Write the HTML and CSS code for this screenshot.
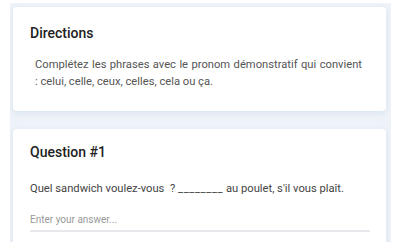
FILE: index.html
```html
<!DOCTYPE html>
<html>
<head>
<meta charset="utf-8">
<link rel="stylesheet" href="styles.css">
</head>
<body>
<div class="panel">
  <section class="card card-directions">
    <h2 class="card-title">Directions</h2>
    <p class="directions-text">Complétez les phrases avec le pronom démonstratif qui convient : celui, celle, ceux, celles, cela ou ça.</p>
  </section>
  <section class="card card-question">
    <h2 class="card-title">Question #1</h2>
    <p class="question-text">Quel sandwich voulez-vous&nbsp; ? <span class="blank">________</span> au poulet, s'il vous plaît.</p>
    <input class="answer" type="text" placeholder="Enter your answer...">
  </section>
</div>
</body>
</html>
```
FILE: styles.css
```css
html, body {
  margin: 0;
  padding: 0;
  background: #ffffff;
  font-family: "Roboto", "Noto Sans", sans-serif;
}
body {
  width: 400px;
  height: 250px;
  overflow: hidden;
}
.panel {
  margin: 3px 9px 0 10px;
  height: 239px;
  overflow: hidden;
  background: #eef3f9;
  padding: 4px 5px 0 3px;
  box-sizing: border-box;
  display: flex;
  flex-direction: column;
  gap: 18px;
}
.card {
  background: #ffffff;
  border-radius: 4px;
  box-shadow: 0 2px 6px rgba(120, 150, 190, 0.18);
  padding: 17px 19px 0 17px;
  flex-shrink: 0;
}
.card-directions {
  height: 104px;
  box-sizing: border-box;
}
.card-question {
  height: 160px;
  box-sizing: border-box;
  padding-top: 14px;
}
.card-title {
  margin: 0;
  font-size: 14px;
  font-weight: 500;
  color: #222;
  line-height: 18px;
}
.directions-text {
  margin: 14px 5px 0 5px;
  font-size: 11.2px;
  line-height: 17px;
  color: #555;
  text-align: justify;
}
.question-text {
  margin: 19px 0 0 0;
  font-size: 11.2px;
  line-height: 17px;
  color: #444;
}
.blank {
  letter-spacing: 0.6px;
}
.answer {
  display: block;
  margin-top: 13px;
  width: 340px;
  border: none;
  border-bottom: 2px solid #e6e8eb;
  padding: 4px 0 5px 0;
  font-family: inherit;
  font-size: 10px;
  color: #444;
  outline: none;
  background: transparent;
}
.answer::placeholder {
  color: #999;
}
```
